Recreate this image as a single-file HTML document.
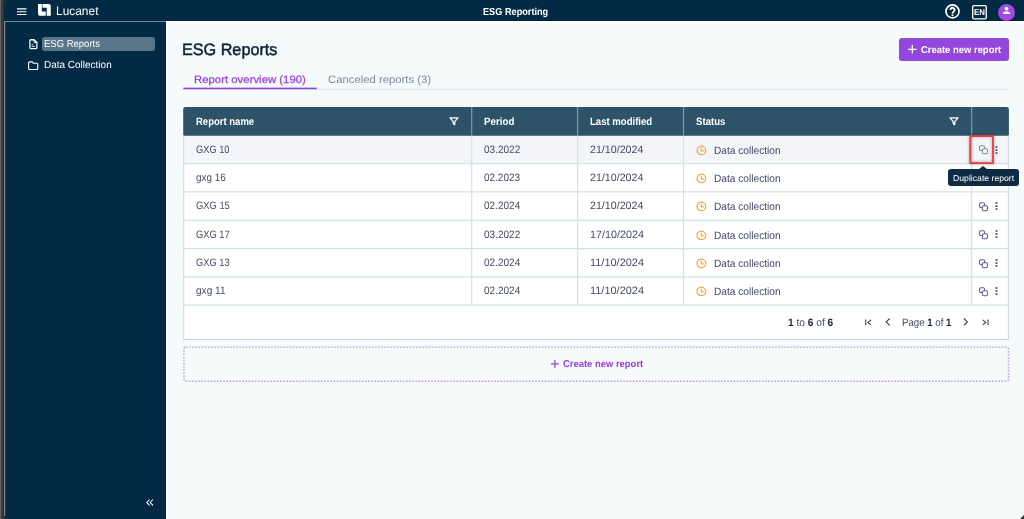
<!DOCTYPE html>
<html lang="en">
<head>
<meta charset="utf-8">
<title>ESG Reporting</title>
<style>
html,body{margin:0;padding:0;}
body{width:1024px;height:519px;overflow:hidden;position:relative;background:#333;font-family:"Liberation Sans", sans-serif;}
.abs,.t,.ic{position:absolute;}
.t{white-space:nowrap;display:block;margin:0;text-rendering:geometricPrecision;}
.t b{font-weight:700;color:#1a2238;}
.ic{display:block;overflow:visible;}
#frame{left:0;top:0;width:12px;height:519px;background:linear-gradient(90deg,#646464 0,#646464 1px,#383838 1px,#3f4040 3px,#2e2e2e 3px,#2e2e2e 4px,#333 4px);}
#top{left:4px;top:0;width:1020px;height:21px;background:linear-gradient(180deg,#022a44 0,#022a44 20px,#01223c 20px);border-top-left-radius:4px;}
#side{left:4px;top:21px;width:161.7px;height:498px;background:#022a44;border-bottom-left-radius:4px;}
#content{left:165.7px;top:21px;width:858.3px;height:498px;background:#f5fafb;border-left:2px solid #fff;border-top:2px solid #fff;box-sizing:border-box;}
#topline{left:4px;top:21px;width:161.7px;height:1px;background:#70859a;}
#leftline{left:4px;top:21px;width:1px;height:495px;background:#7c8091;}
#leftline2{left:5px;top:22px;width:1px;height:494px;background:rgba(60,110,150,.35);}
#navsel{left:42px;top:37px;width:113.2px;height:13.7px;border-radius:3px;background:#5a7789;}
#btn{left:898.8px;top:38.1px;width:110.2px;height:22.6px;border-radius:3px;background:#9447dc;}
#tip{left:948px;top:169.3px;width:71px;height:16.6px;border-radius:3px;background:#0d2b43;}
#tiparrow{left:979.2px;top:166px;width:0;height:0;border-left:4px solid transparent;border-right:4px solid transparent;border-bottom:3.6px solid #0d2b43;}
#corner{right:0;bottom:0;width:0;height:0;border-left:4px solid transparent;border-bottom:4px solid #333;}
</style>
</head>
<body>
<div class="abs" id="frame"></div>
<header class="abs" id="top"></header>
<nav class="abs" id="side"></nav>
<div class="abs" id="content"></div>
<div class="abs" id="topline"></div>
<div class="abs" id="leftline"></div><div class="abs" id="leftline2"></div>

<!-- top bar -->
<svg class="ic" style="left:16.8px;top:7.6px" width="9.4" height="7.4" viewBox="0 0 9.4 7.4" stroke="#fff" stroke-width="1.05"><path d="M0 0.9h9.4M0 3.7h9.4M0 6.5h9.4"/></svg>
<svg class="ic" style="left:38.36px;top:4.05px" width="12.8" height="11.8" viewBox="0 0 12.72 11.75" fill="#fff"><path d="M0 0H3.85V7.5H7.7V11.75H1.7Q0 11.75 0 10.05Z"/><path d="M4.45 0H10.8Q12.72 0 12.72 1.9V11.75H8.67V3.65H4.45Z"/></svg>
<span class="t" id="t_brand" style="left:56.23px;top:4px;font-size:12.2px;line-height:15px;font-weight:400;color:#fff;transform:scale(0.9790,1.000);transform-origin:0 11px;">Lucanet</span>
<span class="t" id="t_title" style="left:482.54px;top:7px;font-size:10.1px;line-height:12px;font-weight:700;color:#fff;transform:scale(0.9083,1.000);transform-origin:0 8px;">ESG Reporting</span>
<svg class="ic" style="left:945.2px;top:4.2px" width="15" height="15" viewBox="0 0 15 15" fill="none" stroke="#fff"><circle cx="7.5" cy="7.4" r="6.5" stroke-width="1.7"/><path d="M5.4 5.9a2.1 2.1 0 1 1 3.2 1.8c-.8.5-1.1.9-1.1 1.7" stroke-width="1.9"/><circle cx="7.5" cy="11.3" r="1.05" fill="#fff" stroke="none"/></svg>
<svg class="ic" style="left:971px;top:3.5px" width="17" height="17" viewBox="0 0 17 17" fill="none"><rect x="1.65" y="1.65" width="13.6" height="13.2" rx="1.3" stroke="#fff" stroke-width="1.35"/></svg>
<span class="t" id="t_en" style="left:974.11px;top:8px;font-size:7.5px;line-height:9px;font-weight:700;color:#fff;transform:scale(1.0467,1.140);transform-origin:0 7px;">EN</span>
<div class="abs" style="left:997.8px;top:3.5px;width:17.2px;height:17px;border-radius:50%;background:#a34ae5"></div>
<svg class="ic" style="left:1001.7px;top:6.4px" width="9" height="9" viewBox="0 0 10 10" fill="#fff"><circle cx="5" cy="2.9" r="2.1"/><path d="M0.9 8.9c0-2.1 1.9-3 4.1-3s4.1.9 4.1 3z"/></svg>

<!-- sidebar -->
<div class="abs" id="navsel"></div>
<svg class="ic" style="left:28.7px;top:38.8px" width="8.7" height="10.2" viewBox="0 0 9 10.4" fill="none" stroke="#fff" stroke-width="1.3" stroke-linejoin="round"><path d="M1.9.7h3.4L8.2 3.6v5.2q0 1-1 1H1.9q-1 0-1-1V1.7q0-1 1-1z"/><path d="M5.2.8v2.9h2.9" stroke-width=".9"/><path d="M2.7 7.6h3.4M2.7 5.7h1.6" stroke-width=".9"/></svg>
<span class="t" id="t_nav1" style="left:43.92px;top:39px;font-size:10.2px;line-height:12px;font-weight:400;color:#fff;transform:scale(0.9323,1.000);transform-origin:0 8px;">ESG Reports</span>
<svg class="ic" style="left:28px;top:60.6px" width="10.4" height="9.4" viewBox="0 0 10.4 9.4" fill="none" stroke="#fff" stroke-width="1.1" stroke-linejoin="round"><path d="M1.6.9h2.6l1.1 1.3h3.5q1 0 1 1v4.3q0 1-1 1H1.6q-1 0-1-1V1.9q0-1 1-1z"/></svg>
<span class="t" id="t_nav2" style="left:44.18px;top:60px;font-size:10.2px;line-height:12px;font-weight:400;color:#fff;transform:scale(0.9797,1.000);transform-origin:0 8px;">Data Collection</span>
<svg class="ic" style="left:145.6px;top:499.4px" width="7.6" height="6.8" viewBox="0 0 7.6 6.8" fill="none" stroke="#fff" stroke-width="1.05"><path d="M3.6.5L.8 3.4l2.8 2.9M7 .5L4.2 3.4 7 6.3"/></svg>

<!-- main -->
<main>
<span class="t" id="t_h1" style="left:182.29px;top:40px;font-size:16.5px;line-height:20px;font-weight:400;color:#0b2239;transform:scale(0.9811,1.000);transform-origin:0 15px;-webkit-text-stroke:0.5px #0b2239;">ESG Reports</span>
<span class="t" id="t_tab1" style="left:193.69px;top:74px;font-size:10.7px;line-height:13px;font-weight:400;color:#9843de;transform:scale(1.0641,1.000);transform-origin:0 9px;-webkit-text-stroke:0.25px #9843de;">Report overview (190)</span>
<span class="t" id="t_tab2" style="left:327.85px;top:74px;font-size:10.7px;line-height:13px;font-weight:400;color:#7d88a6;transform:scale(1.0583,1.000);transform-origin:0 9px;">Canceled reports (3)</span>
<div class="abs" id="btn"></div>
<svg class="ic" style="left:908.2px;top:45.2px" width="8.6" height="8.6" viewBox="0 0 8.6 8.6" stroke="#fff" stroke-width="1.3"><path d="M4.3 0v8.6M0 4.3h8.6"/></svg>
<span class="t" id="t_btn" style="left:920.58px;top:45px;font-size:10.0px;line-height:12px;font-weight:700;color:#fff;transform:scale(0.9434,1.000);transform-origin:0 8px;">Create new report</span>

<svg class="ic" style="left:0;top:0" width="1024" height="519" viewBox="0 0 1024 519" fill="none"><rect x="183.2" y="107.0" width="825.70" height="232.90" rx="2.4" fill="#fff"/><rect x="183.2" y="135.3" width="825.70" height="28.40" fill="#f4f5f8"/><path d="M183.2 135.70000000000002V109.4Q183.2 107.0 185.6 107.0H1006.5Q1008.9 107.0 1008.9 109.4V135.70000000000002Z" fill="#2e5268"/><path d="M471.7 107.0V135.3M577.6 107.0V135.3M683.5 107.0V135.3M971.65 107.0V135.3" stroke="#7f9aa8" stroke-width="1.2"/><path d="M471.7 135.70000000000002V305.10M577.6 135.70000000000002V305.10M683.5 135.70000000000002V305.10M971.65 135.70000000000002V305.10" stroke="#d4e3e9" stroke-width="1.25"/><path d="M183.2 163.70H1008.9M183.2 191.98H1008.9M183.2 220.26H1008.9M183.2 248.54H1008.9M183.2 276.82H1008.9M183.2 305.10H1008.9" stroke="#d2e2e8" stroke-width="1.25"/><path d="M183.7 135.3V339.4H1008.4V135.3" fill="none" stroke="#cbdde4" stroke-width="1.1"/><rect x="183.3" y="88.85" width="825.6" height="0.85" fill="#d9dde7"/><rect x="183.3" y="87.65" width="133.5" height="1.55" fill="#9340da"/></svg>
<span class="t" id="t_th1" style="left:195.68px;top:116px;font-size:10.7px;line-height:13px;font-weight:700;color:#fff;transform:scale(0.8904,1.000);transform-origin:0 9px;">Report name</span><svg class="ic" style="left:448.8px;top:116.6px" width="10" height="9" viewBox="0 0 10 9" fill="none" stroke="#fff" stroke-width="1.25" stroke-linejoin="round"><path d="M1 .95h8L5.75 4.7v3.1L4.25 6.8V4.7z"/></svg><span class="t" id="t_th2" style="left:484.29px;top:116px;font-size:10.7px;line-height:13px;font-weight:700;color:#fff;transform:scale(0.9121,1.000);transform-origin:0 9px;">Period</span><span class="t" id="t_th3" style="left:590.19px;top:116px;font-size:10.7px;line-height:13px;font-weight:700;color:#fff;transform:scale(0.8944,1.000);transform-origin:0 9px;">Last modified</span><span class="t" id="t_th4" style="left:696.27px;top:116px;font-size:10.7px;line-height:13px;font-weight:700;color:#fff;transform:scale(0.9020,1.000);transform-origin:0 9px;">Status</span><svg class="ic" style="left:948.8px;top:116.6px" width="10" height="9" viewBox="0 0 10 9" fill="none" stroke="#fff" stroke-width="1.25" stroke-linejoin="round"><path d="M1 .95h8L5.75 4.7v3.1L4.25 6.8V4.7z"/></svg>
<span class="t" id="t_n0" style="left:195.73px;top:144px;font-size:10.7px;line-height:13px;font-weight:400;color:#454a6a;transform:scale(0.8665,1.000);transform-origin:0 9px;">GXG 10</span><span class="t" id="t_p0" style="left:484.10px;top:144px;font-size:10.7px;line-height:13px;font-weight:400;color:#454a6a;transform:scale(0.9370,1.000);transform-origin:0 9px;">03.2022</span><span class="t" id="t_d0" style="left:590.38px;top:144px;font-size:10.7px;line-height:13px;font-weight:400;color:#454a6a;transform:scale(0.9980,1.000);transform-origin:0 9px;">21/10/2024</span><svg class="ic" style="left:696.4px;top:144.69px" width="10.8" height="10.8" viewBox="0 0 10.8 10.8" fill="none" stroke="#f7aa46" stroke-width="1.3" stroke-linecap="round" stroke-linejoin="round"><circle cx="5.4" cy="5.4" r="4.3"/><path d="M5.3 3.2v2.6h2.3"/></svg><span class="t" id="t_s0" style="left:714.15px;top:145px;font-size:10.7px;line-height:13px;font-weight:400;color:#454a6a;transform:scale(0.9499,1.000);transform-origin:0 9px;">Data collection</span><svg class="ic" style="left:978px;top:144.44px" width="11" height="11" viewBox="0 0 11 11" fill="none" stroke="#8588ab" stroke-width="1.05"><rect x="1.5" y="1.7" width="5.05" height="4.75" rx="1.4"/><rect x="4.3" y="4.75" width="5.2" height="4.95" rx="1.4" fill="#f4f5f8"/></svg><svg class="ic" style="left:995.3px;top:144.64px" width="3" height="10" viewBox="0 0 3 10" fill="#30356c"><rect x="0.5" y="1.15" width="2" height="1.6" rx=".3"/><rect x="0.5" y="4.2" width="2" height="1.6" rx=".3"/><rect x="0.5" y="7.25" width="2" height="1.6" rx=".3"/></svg>
<span class="t" id="t_n1" style="left:195.73px;top:172px;font-size:10.7px;line-height:13px;font-weight:400;color:#454a6a;transform:scale(0.9288,1.000);transform-origin:0 9px;">gxg 16</span><span class="t" id="t_p1" style="left:484.10px;top:172px;font-size:10.7px;line-height:13px;font-weight:400;color:#454a6a;transform:scale(0.9336,1.000);transform-origin:0 9px;">02.2023</span><span class="t" id="t_d1" style="left:590.38px;top:172px;font-size:10.7px;line-height:13px;font-weight:400;color:#454a6a;transform:scale(0.9980,1.000);transform-origin:0 9px;">21/10/2024</span><svg class="ic" style="left:696.4px;top:172.97px" width="10.8" height="10.8" viewBox="0 0 10.8 10.8" fill="none" stroke="#f7aa46" stroke-width="1.3" stroke-linecap="round" stroke-linejoin="round"><circle cx="5.4" cy="5.4" r="4.3"/><path d="M5.3 3.2v2.6h2.3"/></svg><span class="t" id="t_s1" style="left:714.15px;top:173px;font-size:10.7px;line-height:13px;font-weight:400;color:#454a6a;transform:scale(0.9499,1.000);transform-origin:0 9px;">Data collection</span><svg class="ic" style="left:978px;top:172.72px" width="11" height="11" viewBox="0 0 11 11" fill="none" stroke="#5a5e94" stroke-width="1.05"><rect x="1.5" y="1.7" width="5.05" height="4.75" rx="1.4"/><rect x="4.3" y="4.75" width="5.2" height="4.95" rx="1.4" fill="#fff"/></svg><svg class="ic" style="left:995.3px;top:172.92px" width="3" height="10" viewBox="0 0 3 10" fill="#30356c"><rect x="0.5" y="1.15" width="2" height="1.6" rx=".3"/><rect x="0.5" y="4.2" width="2" height="1.6" rx=".3"/><rect x="0.5" y="7.25" width="2" height="1.6" rx=".3"/></svg>
<span class="t" id="t_n2" style="left:195.73px;top:200px;font-size:10.7px;line-height:13px;font-weight:400;color:#454a6a;transform:scale(0.8747,1.000);transform-origin:0 9px;">GXG 15</span><span class="t" id="t_p2" style="left:484.10px;top:200px;font-size:10.7px;line-height:13px;font-weight:400;color:#454a6a;transform:scale(0.9373,1.000);transform-origin:0 9px;">02.2024</span><span class="t" id="t_d2" style="left:590.38px;top:200px;font-size:10.7px;line-height:13px;font-weight:400;color:#454a6a;transform:scale(0.9980,1.000);transform-origin:0 9px;">21/10/2024</span><svg class="ic" style="left:696.4px;top:201.25px" width="10.8" height="10.8" viewBox="0 0 10.8 10.8" fill="none" stroke="#f7aa46" stroke-width="1.3" stroke-linecap="round" stroke-linejoin="round"><circle cx="5.4" cy="5.4" r="4.3"/><path d="M5.3 3.2v2.6h2.3"/></svg><span class="t" id="t_s2" style="left:714.15px;top:201px;font-size:10.7px;line-height:13px;font-weight:400;color:#454a6a;transform:scale(0.9499,1.000);transform-origin:0 9px;">Data collection</span><svg class="ic" style="left:978px;top:201.00px" width="11" height="11" viewBox="0 0 11 11" fill="none" stroke="#5a5e94" stroke-width="1.05"><rect x="1.5" y="1.7" width="5.05" height="4.75" rx="1.4"/><rect x="4.3" y="4.75" width="5.2" height="4.95" rx="1.4" fill="#fff"/></svg><svg class="ic" style="left:995.3px;top:201.20px" width="3" height="10" viewBox="0 0 3 10" fill="#30356c"><rect x="0.5" y="1.15" width="2" height="1.6" rx=".3"/><rect x="0.5" y="4.2" width="2" height="1.6" rx=".3"/><rect x="0.5" y="7.25" width="2" height="1.6" rx=".3"/></svg>
<span class="t" id="t_n3" style="left:195.73px;top:229px;font-size:10.7px;line-height:13px;font-weight:400;color:#454a6a;transform:scale(0.8745,1.000);transform-origin:0 9px;">GXG 17</span><span class="t" id="t_p3" style="left:484.10px;top:229px;font-size:10.7px;line-height:13px;font-weight:400;color:#454a6a;transform:scale(0.9370,1.000);transform-origin:0 9px;">03.2022</span><span class="t" id="t_d3" style="left:590.38px;top:229px;font-size:10.7px;line-height:13px;font-weight:400;color:#454a6a;transform:scale(1.0079,1.000);transform-origin:0 9px;">17/10/2024</span><svg class="ic" style="left:696.4px;top:229.53px" width="10.8" height="10.8" viewBox="0 0 10.8 10.8" fill="none" stroke="#f7aa46" stroke-width="1.3" stroke-linecap="round" stroke-linejoin="round"><circle cx="5.4" cy="5.4" r="4.3"/><path d="M5.3 3.2v2.6h2.3"/></svg><span class="t" id="t_s3" style="left:714.15px;top:230px;font-size:10.7px;line-height:13px;font-weight:400;color:#454a6a;transform:scale(0.9499,1.000);transform-origin:0 9px;">Data collection</span><svg class="ic" style="left:978px;top:229.28px" width="11" height="11" viewBox="0 0 11 11" fill="none" stroke="#5a5e94" stroke-width="1.05"><rect x="1.5" y="1.7" width="5.05" height="4.75" rx="1.4"/><rect x="4.3" y="4.75" width="5.2" height="4.95" rx="1.4" fill="#fff"/></svg><svg class="ic" style="left:995.3px;top:229.48px" width="3" height="10" viewBox="0 0 3 10" fill="#30356c"><rect x="0.5" y="1.15" width="2" height="1.6" rx=".3"/><rect x="0.5" y="4.2" width="2" height="1.6" rx=".3"/><rect x="0.5" y="7.25" width="2" height="1.6" rx=".3"/></svg>
<span class="t" id="t_n4" style="left:195.73px;top:257px;font-size:10.7px;line-height:13px;font-weight:400;color:#454a6a;transform:scale(0.8734,1.000);transform-origin:0 9px;">GXG 13</span><span class="t" id="t_p4" style="left:484.10px;top:257px;font-size:10.7px;line-height:13px;font-weight:400;color:#454a6a;transform:scale(0.9373,1.000);transform-origin:0 9px;">02.2024</span><span class="t" id="t_d4" style="left:590.38px;top:257px;font-size:10.7px;line-height:13px;font-weight:400;color:#454a6a;transform:scale(1.0246,1.000);transform-origin:0 9px;">11/10/2024</span><svg class="ic" style="left:696.4px;top:257.81px" width="10.8" height="10.8" viewBox="0 0 10.8 10.8" fill="none" stroke="#f7aa46" stroke-width="1.3" stroke-linecap="round" stroke-linejoin="round"><circle cx="5.4" cy="5.4" r="4.3"/><path d="M5.3 3.2v2.6h2.3"/></svg><span class="t" id="t_s4" style="left:714.15px;top:258px;font-size:10.7px;line-height:13px;font-weight:400;color:#454a6a;transform:scale(0.9499,1.000);transform-origin:0 9px;">Data collection</span><svg class="ic" style="left:978px;top:257.56px" width="11" height="11" viewBox="0 0 11 11" fill="none" stroke="#5a5e94" stroke-width="1.05"><rect x="1.5" y="1.7" width="5.05" height="4.75" rx="1.4"/><rect x="4.3" y="4.75" width="5.2" height="4.95" rx="1.4" fill="#fff"/></svg><svg class="ic" style="left:995.3px;top:257.76px" width="3" height="10" viewBox="0 0 3 10" fill="#30356c"><rect x="0.5" y="1.15" width="2" height="1.6" rx=".3"/><rect x="0.5" y="4.2" width="2" height="1.6" rx=".3"/><rect x="0.5" y="7.25" width="2" height="1.6" rx=".3"/></svg>
<span class="t" id="t_n5" style="left:195.73px;top:285px;font-size:10.7px;line-height:13px;font-weight:400;color:#454a6a;transform:scale(0.9438,1.000);transform-origin:0 9px;">gxg 11</span><span class="t" id="t_p5" style="left:484.10px;top:285px;font-size:10.7px;line-height:13px;font-weight:400;color:#454a6a;transform:scale(0.9373,1.000);transform-origin:0 9px;">02.2024</span><span class="t" id="t_d5" style="left:590.38px;top:285px;font-size:10.7px;line-height:13px;font-weight:400;color:#454a6a;transform:scale(1.0246,1.000);transform-origin:0 9px;">11/10/2024</span><svg class="ic" style="left:696.4px;top:286.09px" width="10.8" height="10.8" viewBox="0 0 10.8 10.8" fill="none" stroke="#f7aa46" stroke-width="1.3" stroke-linecap="round" stroke-linejoin="round"><circle cx="5.4" cy="5.4" r="4.3"/><path d="M5.3 3.2v2.6h2.3"/></svg><span class="t" id="t_s5" style="left:714.15px;top:286px;font-size:10.7px;line-height:13px;font-weight:400;color:#454a6a;transform:scale(0.9499,1.000);transform-origin:0 9px;">Data collection</span><svg class="ic" style="left:978px;top:285.84px" width="11" height="11" viewBox="0 0 11 11" fill="none" stroke="#5a5e94" stroke-width="1.05"><rect x="1.5" y="1.7" width="5.05" height="4.75" rx="1.4"/><rect x="4.3" y="4.75" width="5.2" height="4.95" rx="1.4" fill="#fff"/></svg><svg class="ic" style="left:995.3px;top:286.04px" width="3" height="10" viewBox="0 0 3 10" fill="#30356c"><rect x="0.5" y="1.15" width="2" height="1.6" rx=".3"/><rect x="0.5" y="4.2" width="2" height="1.6" rx=".3"/><rect x="0.5" y="7.25" width="2" height="1.6" rx=".3"/></svg>

<!-- pager -->
<span class="t" id="t_pg1" style="left:787.86px;top:317px;font-size:10.7px;line-height:13px;font-weight:400;color:#454a6a;transform:scale(0.9504,1.000);transform-origin:0 9px;"><b>1</b> to <b>6</b> of <b>6</b></span>
<svg class="ic" style="left:864.6px;top:318.9px" width="6.8" height="6.8" viewBox="0 0 6.8 6.8" fill="none" stroke="#333a5c" stroke-width="1.05"><path d="M.75.6v5.6M6 .9L3 3.4l3 2.5"/></svg>
<svg class="ic" style="left:885.3px;top:318.3px" width="5.6" height="7.8" viewBox="0 0 5.6 7.8" fill="none" stroke="#333a5c" stroke-width="1.1"><path d="M4.7.5L1.2 3.9l3.5 3.4"/></svg>
<span class="t" id="t_pg2" style="left:901.84px;top:317px;font-size:10.7px;line-height:13px;font-weight:400;color:#454a6a;transform:scale(0.9051,1.000);transform-origin:0 9px;">Page <b>1</b> of <b>1</b></span>
<svg class="ic" style="left:963.2px;top:318.3px" width="5.6" height="7.8" viewBox="0 0 5.6 7.8" fill="none" stroke="#333a5c" stroke-width="1.1"><path d="M.9.5l3.5 3.4L.9 7.3"/></svg>
<svg class="ic" style="left:981.9px;top:318.9px" width="6.8" height="6.8" viewBox="0 0 6.8 6.8" fill="none" stroke="#333a5c" stroke-width="1.05"><path d="M6.05.6v5.6M.8.9l3 2.5-3 2.5"/></svg>

<!-- dashed create box -->
<svg class="ic" style="left:182px;top:345px" width="829" height="39" viewBox="0 0 829 39" fill="none"><rect x="1.9" y="2.1" width="824.6" height="34.2" rx="2" stroke="#c99eec" stroke-width="1.45" stroke-dasharray="1.7 1.45"/></svg>
<svg class="ic" style="left:550.8px;top:360.3px" width="7.8" height="7.8" viewBox="0 0 7.8 7.8" stroke="#953fd8" stroke-width="1.25"><path d="M3.9 0v7.8M0 3.9h7.8"/></svg>
<span class="t" id="t_add" style="left:562.64px;top:359px;font-size:9.9px;line-height:12px;font-weight:700;color:#953fd8;transform:scale(0.9551,1.000);transform-origin:0 8px;">Create new report</span>

<!-- highlight + tooltip -->
<svg class="ic" style="left:964px;top:130px;filter:drop-shadow(0 0 1.6px rgba(0,0,0,.4))" width="36" height="40" viewBox="0 0 36 40" fill="none"><rect x="6.3" y="6.1" width="22.7" height="27" stroke="#ea3a40" stroke-width="1.8"/></svg>
<div class="abs" id="tiparrow"></div>
<div class="abs" id="tip" role="tooltip"></div>
<span class="t" id="t_tip" style="left:952.88px;top:173px;font-size:8.6px;line-height:10px;font-weight:400;color:#fff;transform:scale(1.0080,1.000);transform-origin:0 8px;">Duplicate report</span>
</main>
<div class="abs" id="corner"></div>
</body>
</html>
